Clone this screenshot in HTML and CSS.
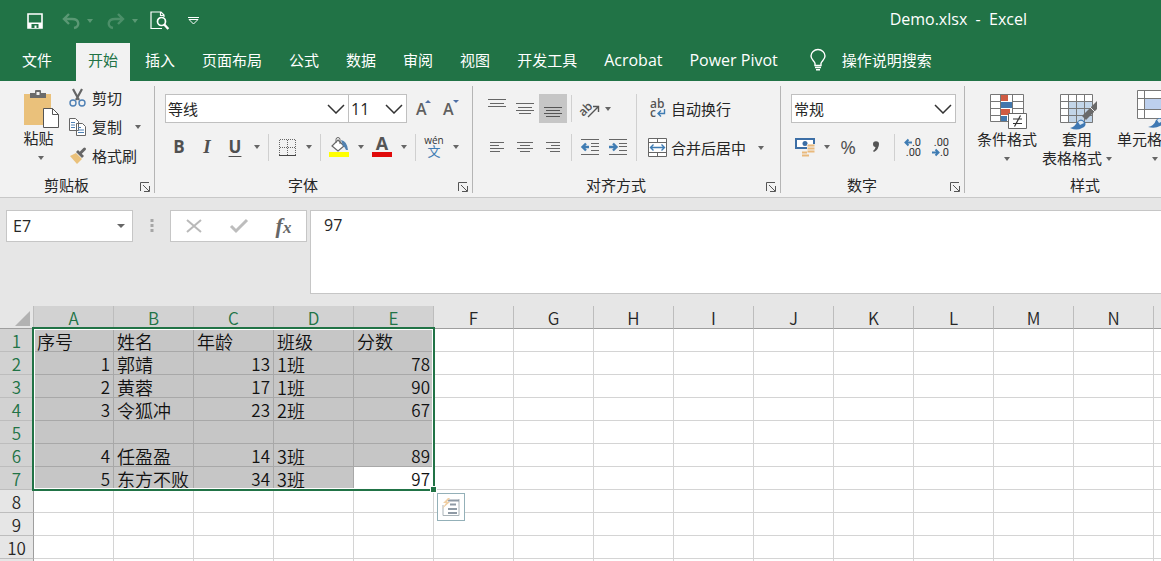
FILE: index.html
```html
<!DOCTYPE html>
<html lang="zh-CN">
<head>
<meta charset="utf-8">
<meta name="viewport" content="width=device-width, initial-scale=1">
<title>Demo.xlsx - Excel</title>
<link rel="stylesheet" href="styles.css">
</head>
<body>
<svg class="defs" aria-hidden="true">
  <symbol id="launcher" viewBox="0 0 10 10"><path d="M.5 9V.5H9M3 3l6 6M9.500 4v5.500H4" fill="none" stroke="#555"/></symbol>
  <symbol id="chevron" viewBox="0 0 18 10"><path d="M1 1l8 8 8-8" fill="none" stroke="#333" stroke-width="1.500"/></symbol>
</svg>

<header class="top">
  <div class="titlebar">
    <div class="quick">
      <button class="q" aria-label="保存"><svg width="16" height="16" viewBox="0 0 16 16"><path d="M1 1h14v14H1z" fill="none" stroke="#fff" stroke-width="1.600"/><path d="M1 9.500h14V15H1z" fill="#fff"/><path d="M4.500 11h7v4h-2v-2.500h-2V15h-3z" fill="#217346"/></svg></button>
      <button class="q undo" aria-label="撤消"><svg width="18" height="16" viewBox="0 0 18 16"><path d="M7 1L2 6l5 5M2 6h8c8 0 8 8 2 9" fill="none" stroke="#5a9874" stroke-width="2.400"/></svg></button>
      <span class="caret dim"></span>
      <button class="q redo" aria-label="恢复"><svg width="18" height="16" viewBox="0 0 18 16"><path d="M11 1l5 5-5 5M16 6H8c-8 0-8 8-2 9" fill="none" stroke="#4c8f69" stroke-width="2.400"/></svg></button>
      <span class="caret dim"></span>
      <button class="q preview" aria-label="打印预览"><svg width="19" height="19" viewBox="0 0 19 19"><path d="M12 17.500H1V1h10l3 3v2M10.500 1v3.500H14" fill="none" stroke="#fff" stroke-width="1.200"/><circle cx="11.500" cy="10.500" r="4" fill="none" stroke="#fff" stroke-width="1.700"/><path d="M14.300 13.500l4 4.500" stroke="#fff" stroke-width="2.400"/></svg></button>
      <button class="q more" aria-label="自定义快速访问工具栏"><svg width="11" height="8" viewBox="0 0 11 8"><path d="M0 .5h11M1 2.500h9L5.500 7z" fill="none" stroke="#fff"/></svg></button>
    </div>
    <h1 class="title">Demo.xlsx&nbsp; -&nbsp; Excel</h1>
  </div>
  <nav class="tabs">
    <button class="tab tab-file">文件</button>
    <button class="tab active">开始</button>
    <button class="tab">插入</button>
    <button class="tab">页面布局</button>
    <button class="tab">公式</button>
    <button class="tab">数据</button>
    <button class="tab">审阅</button>
    <button class="tab">视图</button>
    <button class="tab">开发工具</button>
    <button class="tab latin">Acrobat</button>
    <button class="tab latin">Power Pivot</button>
    <button class="tab tell"><svg width="16" height="22" viewBox="0 0 16 22"><path d="M5 16.500v-2.200C4.500 12 1 10.500 1 7a7 6.500 0 0 1 14 0c0 3.500-3.500 5-4 7.300v2.200zM5 18.500h6M6 20.700h4" fill="none" stroke="#fff" stroke-width="1.400"/></svg>操作说明搜索</button>
  </nav>
</header>

<section class="ribbon" aria-label="开始">
  <div class="group g-clip">
    <div class="body">
      <button class="big paste">
        <svg width="35" height="38" viewBox="0 0 35 38"><path d="M0 4h27v31H0z" fill="#eac17b"/><path d="M6 3h5V1q0-1 1-1h4q1 0 1 1v2h5v5H6z" fill="#6b6b6b"/><path d="M12.500 2h3v3h-3z" fill="#f2f2f2"/><path d="M19.500 18.500h9l6 6v13h-15z" fill="#fff" stroke="#555"/><path d="M28.500 18.500v6h6" fill="none" stroke="#555"/></svg>
        <span>粘贴</span><span class="caret"></span>
      </button>
      <div class="stack">
        <button class="item"><svg width="18" height="18" viewBox="0 0 18 18"><path d="M4 0l6 11M13 0L7 11" stroke="#666" stroke-width="2.200"/><circle cx="4" cy="14" r="3" fill="none" stroke="#4f81b5" stroke-width="1.400"/><circle cx="13" cy="14" r="3" fill="none" stroke="#4f81b5" stroke-width="1.400"/></svg>剪切</button>
        <button class="item"><svg width="18" height="18" viewBox="0 0 18 18"><path d="M.5.5h6l3 3v9h-9zM7.500 5.500h6l3 3v9h-9z" fill="#fff" stroke="#666"/><path d="M2 4.500h4M2 7h4M2 9.500h4M9 9.500h3M9 12h6M9 14.500h6" stroke="#4f81b5"/></svg>复制<span class="caret"></span></button>
        <button class="item"><svg width="18" height="18" viewBox="0 0 18 18"><path d="M1 9l6-3 6 6-5 5z" fill="#eac17b"/><path d="M7 5l2-2 6 6-2 2z" fill="#666"/><path d="M11.500 6l4-4" stroke="#666" stroke-width="3" stroke-linecap="round"/></svg>格式刷</button>
      </div>
    </div>
    <div class="foot"><span>剪贴板</span><button class="launch" aria-label="剪贴板设置"><svg width="10" height="10"><use href="#launcher"/></svg></button></div>
  </div>

  <div class="group g-font">
    <div class="body col">
      <div class="row">
        <label class="combo c-font"><select aria-label="字体"><option>等线</option></select><svg width="18" height="10"><use href="#chevron"/></svg></label>
        <label class="combo c-size"><select aria-label="字号"><option>11</option></select><svg width="18" height="10"><use href="#chevron"/></svg></label>
        <button class="btn grow" aria-label="增大字号"><svg width="18" height="20" viewBox="0 0 18 20"><text x="2" y="16" class="t-a">A</text><path d="M11 4l3-3 3 3z" fill="#4f6fa5"/></svg></button>
        <button class="btn" aria-label="减小字号"><svg width="18" height="20" viewBox="0 0 18 20"><text x="1" y="16" class="t-a">A</text><path d="M11 1h6l-3 3z" fill="#4f6fa5"/></svg></button>
      </div>
      <div class="row tools">
        <button class="btn bold">B</button>
        <button class="btn ital">I</button>
        <button class="btn und">U</button>
        <button class="drop" aria-label="下划线选项"><span class="caret"></span></button>
        <i class="sep"></i>
        <button class="btn" aria-label="边框"><svg width="17" height="17" viewBox="0 0 17 17"><path d="M.5 16V.5h16V16M8.500 1v15M1 8.500h16" fill="none" stroke="#666" stroke-dasharray="1 1"/><path d="M0 16.500h17" stroke="#444"/></svg></button>
        <button class="drop" aria-label="边框选项"><span class="caret"></span></button>
        <i class="sep"></i>
        <button class="btn" aria-label="填充颜色"><svg width="20" height="20" viewBox="0 0 20 20"><path d="M9 3l6 6-6 5-6-5z" fill="#fff" stroke="#666" stroke-width="1.200"/><path d="M7 6V2.500q0-2 2-2t2 2V7" fill="none" stroke="#666"/><path d="M12 3q6 1 7 10h-2q-1-3-3-4z" fill="#5181b0"/><path d="M0 15h20v5H0z" fill="#ff0"/></svg></button>
        <button class="drop" aria-label="填充选项"><span class="caret"></span></button>
        <button class="btn" aria-label="字体颜色"><svg width="20" height="20" viewBox="0 0 20 20"><text x="10" y="13" text-anchor="middle" class="t-color">A</text><path d="M0 15h20v5H0z" fill="#e00b0b"/></svg></button>
        <button class="drop" aria-label="字体颜色选项"><span class="caret"></span></button>
        <i class="sep"></i>
        <button class="btn" aria-label="拼音"><svg width="20" height="22" viewBox="0 0 20 22"><text x="10" y="8" text-anchor="middle" class="t-wen">wén</text><text x="10" y="20" text-anchor="middle" class="t-han">文</text></svg></button>
        <button class="drop" aria-label="拼音选项"><span class="caret"></span></button>
      </div>
    </div>
    <div class="foot"><span>字体</span><button class="launch" aria-label="字体设置"><svg width="10" height="10"><use href="#launcher"/></svg></button></div>
  </div>

  <div class="group g-align">
    <div class="body">
      <div class="col">
        <div class="row">
          <button class="btn" aria-label="顶端对齐"><svg width="18" height="20" viewBox="0 0 18 20"><path d="M0 .5h18M2 4.500h14M0 7.500h18" stroke="#666"/></svg></button>
          <button class="btn" aria-label="垂直居中"><svg width="18" height="20" viewBox="0 0 18 20"><path d="M0 4.500h18M2 8.500h14M0 11.500h18M3 14.500h12" stroke="#666"/></svg></button>
          <button class="btn pressed" aria-label="底端对齐"><svg width="18" height="20" viewBox="0 0 18 20"><path d="M0 8.500h18M2 11.500h14M0 14.500h18M2 17.500h14" stroke="#555"/></svg></button>
          <i class="sep"></i>
          <button class="btn" aria-label="方向"><svg width="20" height="20" viewBox="0 0 20 20"><text x="-1" y="14" class="t-rot" transform="rotate(-45 6 11)">ab</text><path d="M8 18L18 8M13 7.500h5.500V13" fill="none" stroke="#555" stroke-width="1.400"/></svg></button>
          <button class="drop near" aria-label="方向选项"><span class="caret"></span></button>
        </div>
        <div class="row tools">
          <button class="btn" aria-label="左对齐"><svg width="16" height="12" viewBox="0 0 16 12"><path d="M1 1.500h14M1 4.500h9M1 7.500h14M1 10.500h10" stroke="#666"/></svg></button>
          <button class="btn" aria-label="居中"><svg width="16" height="12" viewBox="0 0 16 12"><path d="M0 1.500h16M3 4.500h10M0 7.500h16M3 10.500h10" stroke="#666"/></svg></button>
          <button class="btn" aria-label="右对齐"><svg width="16" height="12" viewBox="0 0 16 12"><path d="M1 1.500h14M6 4.500h9M1 7.500h14M5 10.500h10" stroke="#666"/></svg></button>
          <i class="sep"></i>
          <button class="btn" aria-label="减少缩进量"><svg width="18" height="18" viewBox="0 0 18 18"><path d="M0 1.500h18M10 5.500h8M10 8.500h8M10 12.500h8M0 16.500h18" stroke="#666"/><path d="M8 9H2M5 5.500L1.500 9 5 12.500" fill="none" stroke="#3f7cb3" stroke-width="2.400"/></svg></button>
          <button class="btn" aria-label="增加缩进量"><svg width="18" height="18" viewBox="0 0 18 18"><path d="M0 1.500h18M10 5.500h8M10 8.500h8M10 12.500h8M0 16.500h18" stroke="#666"/><path d="M0 9h7M4 5.500L7.500 9 4 12.500" fill="none" stroke="#3f7cb3" stroke-width="2.400"/></svg></button>
        </div>
      </div>
      <i class="sep tall"></i>
      <div class="col wrapcol">
        <button class="item wide"><svg width="20" height="20" viewBox="0 0 20 20"><text x="3" y="9" class="t-ab">ab</text><text x="3" y="18" class="t-ab">c</text><path d="M17.500 10v4.500H11M14 11.500l-3 3 3 3" fill="none" stroke="#3f7cb3" stroke-width="1.400"/></svg>自动换行</button>
        <button class="item wide merge"><svg width="20" height="20" viewBox="0 0 20 20"><path d="M1.500.5h18v18h-18zM1.500 4.500h18M1.500 14.500h18M10.500 1v4M10.500 15v4" fill="#fff" stroke="#666"/><path d="M4 9.500h13M6.500 6.500l-3 3 3 3M14.500 6.500l3 3-3 3" fill="none" stroke="#3f7cb3" stroke-width="1.400"/></svg>合并后居中<span class="caret"></span></button>
      </div>
    </div>
    <div class="foot"><span>对齐方式</span><button class="launch" aria-label="对齐设置"><svg width="10" height="10"><use href="#launcher"/></svg></button></div>
  </div>

  <div class="group g-number">
    <div class="body col">
      <div class="row">
        <label class="combo c-num"><select aria-label="数字格式"><option>常规</option></select><svg width="18" height="10"><use href="#chevron"/></svg></label>
      </div>
      <div class="row tools">
        <button class="btn" aria-label="会计数字格式"><svg width="20" height="20" viewBox="0 0 20 20"><path d="M1 2h18v9H1z" fill="#fff" stroke="#3d6fa6" stroke-width="2"/><path d="M0 1h4L0 5zM20 1h-4l4 4zM0 12h4L0 8z" fill="#3d6fa6"/><circle cx="10" cy="6.500" r="2.500" fill="#3d6fa6"/><path d="M12 7h8v13H7v-6h5z" fill="#f2f2f2"/><path d="M12.500 8.500h7M12.500 11.500h7M12.500 14.500h7M7 15.500h5M7 18.500h7" stroke="#e9b97c" stroke-width="2"/></svg></button>
        <button class="drop" aria-label="会计格式选项"><span class="caret"></span></button>
        <button class="btn pct">%</button>
        <button class="btn comma" aria-label="千位分隔样式"><svg width="8" height="12" viewBox="0 0 8 12"><path d="M1 3a3 2.800 0 0 1 6 0q0 5-5 8l-1-1q2.500-2 2.500-4Q1 6 1 3z" fill="#555"/></svg></button>
        <i class="sep"></i>
        <button class="btn" aria-label="增加小数位数"><svg width="18" height="20" viewBox="0 0 18 20"><path d="M8 5.500H1.500M4.500 2.500l-3 3 3 3" fill="none" stroke="#3f7cb3" stroke-width="2"/><text x="17" y="9" text-anchor="end" class="t-dec">.0</text><text x="17" y="19" text-anchor="end" class="t-dec">.00</text></svg></button>
        <button class="btn" aria-label="减少小数位数"><svg width="18" height="20" viewBox="0 0 18 20"><path d="M0 15.500h6.500M3.500 12.500l3 3-3 3" fill="none" stroke="#3f7cb3" stroke-width="2"/><text x="17" y="9" text-anchor="end" class="t-dec">.00</text><text x="17" y="19" text-anchor="end" class="t-dec">.0</text></svg></button>
      </div>
    </div>
    <div class="foot"><span>数字</span><button class="launch" aria-label="数字设置"><svg width="10" height="10"><use href="#launcher"/></svg></button></div>
  </div>

  <div class="group g-style">
    <div class="body">
      <button class="big">
        <svg class="cond" width="38" height="36" viewBox="0 0 38 36"><path d="M.5.5h33v27H.5z" fill="#fff"/><path d="M11 1h7v6h-7zM11 15h9v6h-9z" fill="#cf5b43"/><path d="M11 8h11v6H11zM11 22h6v6h-6z" fill="#4277ad"/><path d="M.5.5h33v27H.5zM10.500 0v28M22.500 0v28M0 7.500h11M22 7.500h12M0 14.500h11M22 14.500h12M0 21.500h11" fill="none" stroke="#777"/><path d="M18.500 19.500h18v15h-18z" fill="#fff" stroke="#666"/><path d="M23 25h9M23 29.500h9M30.500 21.500l-6 11" stroke="#333" stroke-width="1.200"/></svg>
        <span>条件格式</span><span class="caret"></span>
      </button>
      <button class="big table-fmt">
        <svg width="38" height="36" viewBox="0 0 38 36"><path d="M.5.5h32v28H.5z" fill="#fff"/><path d="M9 8h24v21H9z" fill="#c2d5e8"/><path d="M.5.5h32v28H.5zM8.500 0v28M16.500 0v28M24.500 0v28M0 7.500h33M0 14.500h33M0 21.500h33" fill="none" stroke="#777"/><path d="M37 7v8L26 26l-4-4z" fill="#6a6a6a"/><path d="M30 13l5 5" stroke="#f2f2f2"/><path d="M10 34q5-1 7-6 4-5 8 0 2 4-3 6-5 3-12 0z" fill="#3f78b3"/><path d="M18 28q4-3 6 1l-4 2z" fill="#dce8f3"/></svg>
        <span>套用</span><span class="second">表格格式<span class="caret"></span></span>
      </button>
      <button class="big cell-style">
        <svg width="40" height="38" viewBox="0 0 40 38"><path d="M.5.500h38v28H.5z" fill="#fff"/><path d="M8 9h23v11H8z" fill="#bdd0ee"/><path d="M.5.500h38v28H.500zM7.500 0v29M31.500 0v29M0 8.500h39M0 19.500h39" fill="none" stroke="#777"/><path d="M39 13v6L29 30l-4-4z" fill="#6a6a6a"/><path d="M11 37q6-1 8-7 4-4 8 0 1 4-4 6-5 3-12 1z" fill="#3f78b3"/><path d="M20 30q3-3 6 1l-4 2z" fill="#dce8f3"/></svg>
        <span>单元格样式</span><span class="caret"></span>
      </button>
    </div>
    <div class="foot"><span>样式</span></div>
  </div>
</section>

<section class="formula">
  <div class="namebox"><input type="text" value="E7" aria-label="名称框"><button class="drop" aria-label="名称列表"><span class="caret"></span></button></div>
  <svg class="dots" width="4" height="14" viewBox="0 0 4 14"><path d="M.5 1h3v3h-3zM.5 6h3v3h-3zM.5 11h3v3h-3z" fill="#a6a6a6"/></svg>
  <div class="fxbox">
    <button class="fx" aria-label="取消"><svg width="16" height="14" viewBox="0 0 16 14"><path d="M1 1l14 12M15 1L1 13" stroke="#b9b9b9" stroke-width="2"/></svg></button>
    <button class="fx" aria-label="输入"><svg width="18" height="14" viewBox="0 0 18 14"><path d="M1 7l5 5L17 1" fill="none" stroke="#bdbdbd" stroke-width="3"/></svg></button>
    <button class="fx fn" aria-label="插入函数"><span class="f">f</span><span class="x">x</span></button>
  </div>
  <textarea class="entry" aria-label="编辑栏">97</textarea>
</section>

<main class="sheet">
  <table class="grid">
    <thead>
      <tr><th class="corner" aria-label="全选"><svg width="15" height="15" viewBox="0 0 15 15"><path d="M15 0v15H0z" fill="#b2b2b2"/></svg></th><th class="on">A</th><th class="on">B</th><th class="on">C</th><th class="on">D</th><th class="on">E</th><th>F</th><th>G</th><th>H</th><th>I</th><th>J</th><th>K</th><th>L</th><th>M</th><th>N</th><th></th></tr>
    </thead>
    <tbody>
      <tr class="in"><th>1</th><td>序号</td><td>姓名</td><td>年龄</td><td>班级</td><td>分数</td><td></td><td></td><td></td><td></td><td></td><td></td><td></td><td></td><td></td><td></td></tr>
      <tr class="in"><th>2</th><td class="n">1</td><td>郭靖</td><td class="n">13</td><td>1班</td><td class="n">78</td><td></td><td></td><td></td><td></td><td></td><td></td><td></td><td></td><td></td><td></td></tr>
      <tr class="in"><th>3</th><td class="n">2</td><td>黄蓉</td><td class="n">17</td><td>1班</td><td class="n">90</td><td></td><td></td><td></td><td></td><td></td><td></td><td></td><td></td><td></td><td></td></tr>
      <tr class="in"><th>4</th><td class="n">3</td><td>令狐冲</td><td class="n">23</td><td>2班</td><td class="n">67</td><td></td><td></td><td></td><td></td><td></td><td></td><td></td><td></td><td></td><td></td></tr>
      <tr class="in"><th>5</th><td></td><td></td><td></td><td></td><td></td><td></td><td></td><td></td><td></td><td></td><td></td><td></td><td></td><td></td><td></td></tr>
      <tr class="in"><th>6</th><td class="n">4</td><td>任盈盈</td><td class="n">14</td><td>3班</td><td class="n">89</td><td></td><td></td><td></td><td></td><td></td><td></td><td></td><td></td><td></td><td></td></tr>
      <tr class="in"><th>7</th><td class="n">5</td><td>东方不败</td><td class="n">34</td><td>3班</td><td class="n current">97</td><td></td><td></td><td></td><td></td><td></td><td></td><td></td><td></td><td></td><td></td></tr>
      <tr><th>8</th><td></td><td></td><td></td><td></td><td></td><td></td><td></td><td></td><td></td><td></td><td></td><td></td><td></td><td></td><td></td></tr>
      <tr><th>9</th><td></td><td></td><td></td><td></td><td></td><td></td><td></td><td></td><td></td><td></td><td></td><td></td><td></td><td></td><td></td></tr>
      <tr><th>10</th><td></td><td></td><td></td><td></td><td></td><td></td><td></td><td></td><td></td><td></td><td></td><td></td><td></td><td></td><td></td></tr>
      <tr><th></th><td></td><td></td><td></td><td></td><td></td><td></td><td></td><td></td><td></td><td></td><td></td><td></td><td></td><td></td><td></td></tr>
    </tbody>
  </table>
  <div class="selection"><i class="handle"></i></div>
  <button class="quickfix" aria-label="快速分析"><svg width="20" height="20" viewBox="0 0 20 20"><path d="M2 8v10.500h16V2" fill="none" stroke="#aab3b8"/><path d="M7 3.500h11M9 7.500h6M7 12h9M7 16h9" stroke="#8f9aa5" stroke-width="2"/><path d="M7 1L2 6h3l-4 6 8-7H6l3-4z" fill="#f0cfa4"/></svg></button>
</main>
</body>
</html>
```
FILE: styles.css
```css
* { box-sizing: border-box; }

body {
  margin: 0;
  height: 100vh;
  overflow: hidden;
  display: flex;
  flex-direction: column;
  background: #e6e6e6;
  color: #262626;
  font: 15px/20px "Open Sans", "Noto Sans CJK SC", sans-serif;
}

button, input, select, textarea {
  margin: 0;
  padding: 0;
  border: 0;
  border-radius: 0;
  background: none;
  color: inherit;
  font: inherit;
  outline: none;
}

svg { display: block; flex: none; overflow: visible; }
.defs { position: absolute; width: 0; height: 0; }

.caret {
  flex: none;
  width: 6px;
  border: 3px solid transparent;
  border-top: 4px solid #666;
  border-bottom: 0;
}
.caret.dim { border-top-color: #5a9874; }

/* Title bar and tabs */
.top { flex: none; background: #217346; color: #fff; }

.titlebar {
  display: flex;
  align-items: center;
  justify-content: space-between;
  height: 41px;
  padding: 0 134px 0 27px;
}
.quick { display: flex; align-items: center; }
.q.undo { margin: 0 7px 0 19px; }
.q.redo { margin: 0 7px 0 14px; }
.q.preview { margin: 0 19px 0 12px; }
.title { margin: 0; padding-bottom: 3px; font-size: 16px; font-weight: 400; line-height: 20px; }

.tabs { display: flex; gap: 3px; padding: 2px 0 0 10px; }
.tab { height: 38px; padding: 0 12px 4px; white-space: nowrap; }
.tab-file { margin-right: 9px; }
.tab.active { background: #f2f2f2; color: #217346; }
.tab.latin { font-size: 16px; }
.tell { display: flex; align-items: center; gap: 16px; padding-left: 17px; }

/* Ribbon */
.ribbon {
  flex: none;
  display: flex;
  height: 117px;
  overflow: hidden;
  padding-top: 5px;
  background: #f2f2f2;
  border-bottom: 1px solid #c8c8c8;
}
.group {
  position: relative;
  flex: none;
  display: flex;
  flex-direction: column;
  justify-content: space-between;
  margin-bottom: 4px;
  padding-top: 8px;
  border-right: 1px solid #b5b5b5;
}
.g-clip { width: 155px; }
.g-font { width: 318px; padding-left: 10px; }
.g-align { width: 308px; padding-left: 10px; }
.g-number { width: 184px; padding-left: 10px; }
.g-style { width: 240px; padding-left: 12px; border-right: 0; }

.body { display: flex; }
.col { display: flex; flex-direction: column; gap: 10px; }
.row { display: flex; align-items: center; height: 29px; }
.tools { height: 28px; }

.foot { display: flex; justify-content: center; padding-right: 21px; line-height: 16px; }
.g-font .foot, .g-align .foot, .g-number .foot { padding-right: 31px; }
.g-style .foot { padding-right: 12px; }
.launch { position: absolute; right: 4px; bottom: 1px; }

.btn { display: flex; align-items: center; justify-content: center; width: 28px; height: 29px; }
.btn.pressed { background: #c6c6c6; }
.grow { margin-left: 2px; }
.drop { display: flex; align-items: center; justify-content: center; width: 15px; height: 28px; }
.drop.near { width: 8px; }
.sep { flex: none; width: 1px; height: 27px; margin: 0 4px; background: #d0d0d0; }
.sep.tall { height: 67px; }

.combo { position: relative; display: flex; align-items: center; height: 29px; border: 1px solid #c0c0c0; background: #fff; }
.combo select { width: 100%; height: 27px; padding-left: 2px; appearance: none; }
.combo svg { position: absolute; right: 3px; pointer-events: none; }
.c-font { width: 184px; }
.c-size { width: 58px; border-left: 0; }
.c-size select { font-size: 16px; }
.c-num { width: 165px; }

.bold, .ital, .und, .pct { color: #505050; font-weight: 700; font-size: 17px; }
.ital { font-family: "Liberation Serif", serif; font-style: italic; font-size: 19px; }
.und { text-decoration: underline; text-underline-offset: 3px; }
.pct { font-size: 19px; font-weight: 400; }

.t-a { font: 600 16px "Open Sans", sans-serif; fill: #606060; }
.t-color { font: 700 18px "Open Sans", sans-serif; fill: #555; }
.t-wen { font: 10px "Open Sans", sans-serif; fill: #333; }
.t-han { font: 13px "Noto Sans CJK SC", sans-serif; fill: #3f7cb3; }
.t-rot { font: 600 12px "Open Sans", sans-serif; fill: #555; }
.t-ab { font: 600 12px "Open Sans", sans-serif; fill: #555; }
.t-dec { font: 11px Roboto, sans-serif; fill: #333; }

.big { display: flex; flex-direction: column; align-items: center; white-space: nowrap; }
.big svg { height: 36px; }
.big span { line-height: 19px; }
.big .caret { margin-top: 8px; }
.cond { margin-left: 4px; }
.paste { margin: -4px 0 0 18px; }
.paste svg { height: 38px; margin: 0 0 1px 6px; }
.paste .caret { margin-left: 5px; }
.table-fmt { margin-left: 5px; }
.table-fmt svg { margin-left: 4px; }
.cell-style { margin: -4px 0 0 5px; }
.cell-style svg { height: 38px; margin: 0 0 2px 4px; }
.second { display: flex; align-items: center; gap: 4px; }
.second .caret { margin-top: 0; }

.stack { display: flex; flex-direction: column; margin: -11px 0 0 10px; }
.item { display: flex; align-items: center; gap: 5px; height: 29px; white-space: nowrap; }
.item .caret { margin-left: 8px; }
.wide { gap: 4px; margin-left: 6px; }

/* Formula bar */
.formula { flex: none; display: flex; align-items: flex-start; padding: 12px 0 12px 6px; }
.namebox, .fxbox { display: flex; align-items: center; height: 32px; border: 1px solid #c6c6c6; background: #fff; }
.namebox { width: 127px; }
.namebox input { flex: 1; min-width: 0; padding-left: 6px; font-size: 16px; }
.namebox .drop { width: 22px; }
.namebox .caret { width: 8px; border-width: 4px 4px 0; }
.dots { margin: 8px 16px 0 17px; }
.fxbox { width: 137px; }
.fx { display: flex; flex: 1; align-items: center; justify-content: center; }
.fn { color: #666; font-family: "Liberation Serif", serif; font-style: italic; }
.fn .f { font-size: 22px; font-weight: 700; }
.fn .x { font-size: 17px; font-weight: 700; padding-top: 4px; }
.entry { flex: 1; min-width: 0; height: 84px; margin-left: 3px; padding: 4px 13px; border: 1px solid #c6c6c6; border-right: 0; background: #fff; font-size: 16px; resize: none; }

/* Worksheet */
.sheet { position: relative; flex: 1; min-height: 0; overflow: hidden; }
.grid {
  table-layout: fixed;
  width: 1234px;
  border-spacing: 0;
  background: #fff;
  color: #111;
  font: 17px/20px "Noto Sans CJK SC", sans-serif;
}
.grid th, .grid td {
  height: 23px;
  padding: 2px 3px 0;
  border-right: 1px solid #d4d4d4;
  border-bottom: 1px solid #d4d4d4;
  font-weight: 350;
  text-align: left;
  white-space: nowrap;
}
.grid td { font-size: 18px; }
.grid td.n { font-size: 17px; text-align: right; }
.grid th { background: #e6e6e6; color: #262626; text-align: center; }
.grid thead th { width: 80px; border-right-color: #bdbdbd; border-bottom-color: #9e9e9e; }
.grid thead th.corner { width: 34px; }
.corner svg { margin-left: auto; }
.grid tbody th { padding: 2px 0 0; border-right-color: #9e9e9e; border-bottom-color: #bdbdbd; }
.grid th.on, .grid .in th { background: #d2d2d2; color: #217346; }
.in td:nth-child(-n+6) { background: #c6c6c6; border-color: #a8a8a8; }
.in td.current:nth-child(-n+6) { background: #fff; }

.selection {
  position: absolute;
  left: 32px;
  top: 21px;
  width: 403px;
  height: 164px;
  border: 2px solid #217346;
  box-shadow: inset 0 0 0 1px #fff;
  pointer-events: none;
}
.handle { position: absolute; right: -4px; bottom: -4px; width: 7px; height: 7px; background: #217346; border: 1px solid #fff; }
.quickfix { position: absolute; left: 437px; top: 187px; display: flex; align-items: center; justify-content: center; width: 28px; height: 28px; border: 1px solid #93b0b8; background: #fff; }
```
